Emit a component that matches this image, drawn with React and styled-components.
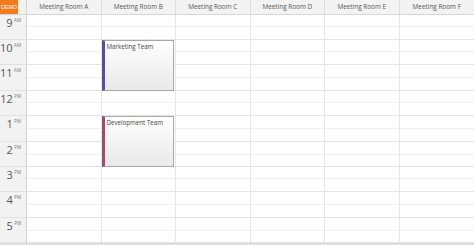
import React from "react";
import styled, { createGlobalStyle } from "styled-components";

const Global = createGlobalStyle`
  html, body { margin: 0; padding: 0; background: #fff; }
  body { font-family: "Open Sans", "Liberation Sans", sans-serif; }
`;

const HOUR = 25.4;
const rooms = ["Meeting Room A", "Meeting Room B", "Meeting Room C", "Meeting Room D", "Meeting Room E", "Meeting Room F"];
const hours = [
  ["9", "AM"], ["10", "AM"], ["11", "AM"], ["12", "PM"], ["1", "PM"],
  ["2", "PM"], ["3", "PM"], ["4", "PM"], ["5", "PM"],
];
const events = [
  { room: 1, start: 1, dur: 2, title: "Marketing Team", color: "#5d4d9e" },
  { room: 1, start: 4, dur: 2, title: "Development Team", color: "#a24a72" },
];

const Calendar = styled.div`
  width: 474px;
  height: 245px;
  display: grid;
  grid-template-columns: 27px repeat(6, 1fr);
  grid-template-rows: 14.6px repeat(9, ${HOUR}px) 1fr;
  overflow: hidden;
  background: #fff;
`;

const Corner = styled.div`
  background: #f2f2f2;
  border-right: 1px solid #d6d6d6;
  border-bottom: 1px solid #d6d6d6;
  box-sizing: border-box;
  position: relative;
`;

const Demo = styled.div`
  position: absolute;
  left: 0;
  top: 0;
  width: 18px;
  height: 14px;
  background: #f37b1d;
  color: #fff;
  font-size: 5.5px;
  display: flex;
  align-items: center;
  justify-content: center;
  font-family: "Liberation Sans", sans-serif;
  letter-spacing: -0.1px;
`;

const RoomHead = styled.div`
  background: #f3f3f3;
  border-right: ${(p) => (p.$last ? "none" : "1px solid #dcdcdc")};
  border-bottom: 1px solid #d6d6d6;
  box-sizing: border-box;
  display: flex;
  align-items: center;
  justify-content: center;
  font-size: 6.4px;
  color: #555;
  white-space: nowrap;
`;

const TimeCell = styled.div`
  background: #f2f2f2;
  border-right: 1px solid #d2d2d2;
  border-bottom: 1px solid #e2e2e2;
  box-sizing: border-box;
  display: flex;
  justify-content: flex-end;
  align-items: flex-start;
  padding: 1px 5px 0 0;
  color: #555;
`;

const Num = styled.span`
  font-size: 11px;
  line-height: 13px;
`;

const Sup = styled.span`
  font-size: 4.5px;
  line-height: 6px;
  margin-left: 1.5px;
  margin-top: 1px;
  color: #777;
`;

const Slot = styled.div`
  position: relative;
  border-right: ${(p) => (p.$last ? "none" : "1px solid #e6e6e6")};
  border-bottom: 1px solid #e3e3e3;
  box-sizing: border-box;
  background: linear-gradient(
    to bottom,
    transparent calc(50% - 0.5px),
    #f0f0f0 calc(50% - 0.5px),
    #f0f0f0 calc(50% + 0.5px),
    transparent calc(50% + 0.5px)
  );
`;

const Footer = styled.div`
  grid-column: 1 / -1;
  background: #dedede;
`;

const Event = styled.div`
  position: absolute;
  left: 0;
  top: 0;
  right: 1px;
  z-index: 1;
  box-sizing: border-box;
  border: 1px solid #a8a8a8;
  border-left: 3px solid ${(p) => p.$color};
  background: linear-gradient(to bottom, #ffffff 0%, #f6f6f6 40%, #e9e9e9 100%);
  font-size: 6.2px;
  color: #444;
  padding: 1px 0 0 2px;
  white-space: nowrap;
  overflow: hidden;
`;

export default function App() {
  const cells = [];
  hours.forEach(([n, ap], i) => {
    cells.push(
      <TimeCell key={`t${i}`}>
        <Num>{n}</Num>
        <Sup>{ap}</Sup>
      </TimeCell>
    );
    rooms.forEach((r, j) => {
      const ev = events.find((e) => e.room === j && e.start === i);
      cells.push(
        <Slot key={`s${i}-${j}`} $last={j === rooms.length - 1}>
          {ev && (
            <Event $color={ev.color} style={{ height: `${ev.dur * HOUR + 0.5}px` }}>
              {ev.title}
            </Event>
          )}
        </Slot>
      );
    });
  });
  return (
    <>
      <Global />
      <Calendar>
        <Corner>
          <Demo>DEMO</Demo>
        </Corner>
        {rooms.map((r, j) => (
          <RoomHead key={r} $last={j === rooms.length - 1}>{r}</RoomHead>
        ))}
        {cells}
        <Footer />
      </Calendar>
    </>
  );
}
